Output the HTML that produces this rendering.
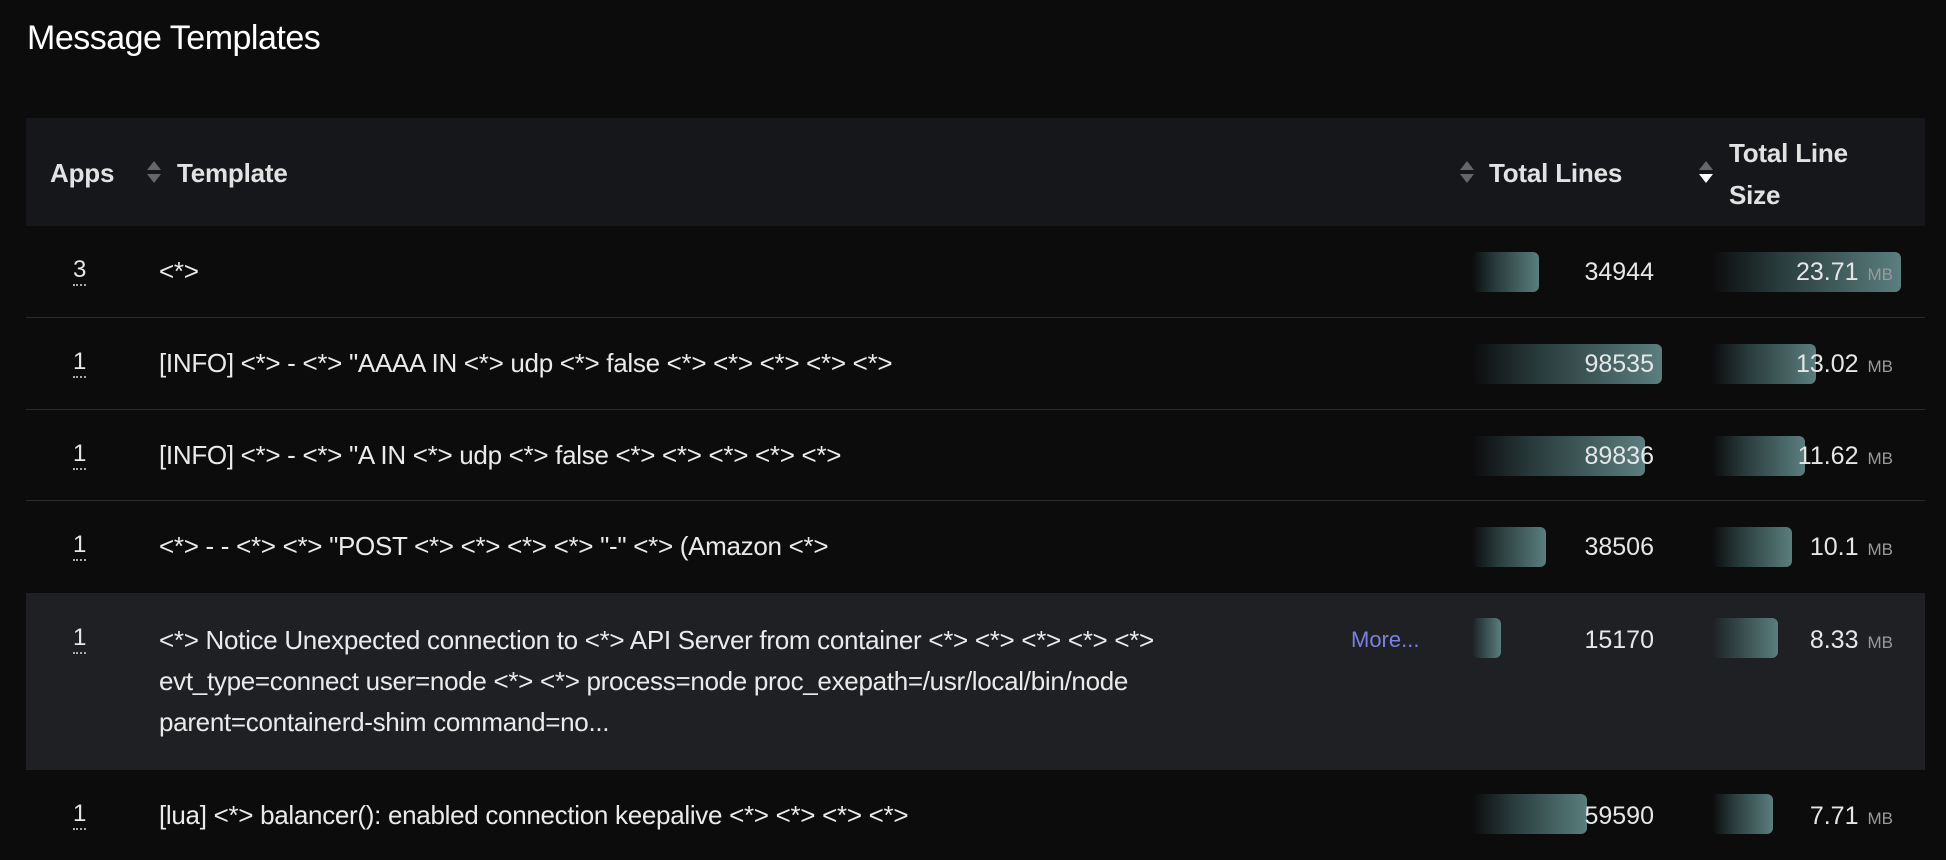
<!DOCTYPE html>
<html><head><meta charset="utf-8"><style>
*{margin:0;padding:0;box-sizing:border-box}
body{width:1946px;height:860px;background:#0c0c0d;color:#e6e6e6;font-family:"Liberation Sans",sans-serif;position:relative;overflow:hidden}
.title{position:absolute;left:27px;top:19px;font-size:34px;color:#fff;letter-spacing:-0.5px}
.hdr{position:absolute;left:26px;top:118px;width:1899px;height:108px;background:#16171a}
.h{position:absolute;font-weight:bold;font-size:26px;color:#e2e2e2;letter-spacing:-0.2px}
.sort{position:absolute;width:16px;height:24px}
.row{position:absolute;left:26px;width:1899px;border-bottom:1px solid #2a2b2d}
.app{position:absolute;left:47px;font-size:24px;border-bottom:2px dotted #aaa;line-height:24px;padding-bottom:2px}
.tpl{position:absolute;left:133px;font-size:26px;line-height:41px;color:#eaeaea;width:1100px;letter-spacing:-0.3px}
.bar{position:absolute;height:40px;border-radius:6px;background:linear-gradient(90deg,rgba(90,125,125,0) 0%,rgba(60,90,90,0.6) 35%,#5b7e7e 100%)}
.bl{left:1446px}.bs{left:1686px}
.num{position:absolute;right:271px;font-size:25px;line-height:40px;text-align:right}
.sz{position:absolute;right:32px;font-size:25px;line-height:40px;text-align:right}
.sz span{font-size:17px;color:#9a9a9a;margin-left:9px}
.more{position:absolute;left:1325px;font-size:22px;color:#7b80e0}
</style></head><body>
<div class="title">Message Templates</div>
<div class="hdr">
 <div class="h" style="left:24px;top:40px">Apps</div>
 <svg class="sort" style="left:120px;top:42px" viewBox="0 0 16 24"><path d="M8 1L15 10H1Z" fill="#666"/><path d="M8 23L15 14H1Z" fill="#666"/></svg>
 <div class="h" style="left:151px;top:40px">Template</div>
 <svg class="sort" style="left:1433px;top:42px" viewBox="0 0 16 24"><path d="M8 1L15 10H1Z" fill="#666"/><path d="M8 23L15 14H1Z" fill="#666"/></svg>
 <div class="h" style="left:1463px;top:40px">Total Lines</div>
 <svg class="sort" style="left:1672px;top:42px" viewBox="0 0 16 24"><path d="M8 1L15 10H1Z" fill="#666"/><path d="M8 23L15 14H1Z" fill="#fff"/></svg>
 <div class="h" style="left:1703px;top:14px;line-height:42px">Total Line<br>Size</div>
</div>

<div class="row" style="top:226px;height:92px">
 <div class="app" style="top:32px">3</div>
 <div class="tpl" style="top:25px">&lt;*&gt;</div>
 <div class="bar bl" style="top:26px;width:67px"></div><div class="num" style="top:26px">34944</div>
 <div class="bar bs" style="top:26px;width:189px"></div><div class="sz" style="top:26px">23.71<span>MB</span></div>
</div>
<div class="row" style="top:318px;height:92px">
 <div class="app" style="top:32px">1</div>
 <div class="tpl" style="top:25px">[INFO] &lt;*&gt; - &lt;*&gt; "AAAA IN &lt;*&gt; udp &lt;*&gt; false &lt;*&gt; &lt;*&gt; &lt;*&gt; &lt;*&gt; &lt;*&gt;</div>
 <div class="bar bl" style="top:26px;width:190px"></div><div class="num" style="top:26px">98535</div>
 <div class="bar bs" style="top:26px;width:104px"></div><div class="sz" style="top:26px">13.02<span>MB</span></div>
</div>
<div class="row" style="top:410px;height:91px">
 <div class="app" style="top:32px">1</div>
 <div class="tpl" style="top:25px">[INFO] &lt;*&gt; - &lt;*&gt; "A IN &lt;*&gt; udp &lt;*&gt; false &lt;*&gt; &lt;*&gt; &lt;*&gt; &lt;*&gt; &lt;*&gt;</div>
 <div class="bar bl" style="top:26px;width:173px"></div><div class="num" style="top:26px">89836</div>
 <div class="bar bs" style="top:26px;width:93px"></div><div class="sz" style="top:26px">11.62<span>MB</span></div>
</div>
<div class="row" style="top:501px;height:92px;border-bottom:none">
 <div class="app" style="top:32px">1</div>
 <div class="tpl" style="top:25px">&lt;*&gt; - - &lt;*&gt; &lt;*&gt; "POST &lt;*&gt; &lt;*&gt; &lt;*&gt; &lt;*&gt; "-" &lt;*&gt; (Amazon &lt;*&gt;</div>
 <div class="bar bl" style="top:26px;width:74px"></div><div class="num" style="top:26px">38506</div>
 <div class="bar bs" style="top:26px;width:80px"></div><div class="sz" style="top:26px">10.1<span>MB</span></div>
</div>
<div class="row" style="top:593px;height:177px;background:#1f2023;border-bottom:none">
 <div class="app" style="top:33px">1</div>
 <div class="tpl" style="top:27px">&lt;*&gt; Notice Unexpected connection to &lt;*&gt; API Server from container &lt;*&gt; &lt;*&gt; &lt;*&gt; &lt;*&gt; &lt;*&gt;<br>evt_type=connect user=node &lt;*&gt; &lt;*&gt; process=node proc_exepath=/usr/local/bin/node<br>parent=containerd-shim command=no...</div>
 <div class="more" style="top:34px">More...</div>
 <div class="bar bl" style="top:25px;width:29px"></div><div class="num" style="top:27px">15170</div>
 <div class="bar bs" style="top:25px;width:66px"></div><div class="sz" style="top:27px">8.33<span>MB</span></div>
</div>
<div class="row" style="top:770px;height:90px;border-bottom:none">
 <div class="app" style="top:32px">1</div>
 <div class="tpl" style="top:25px">[lua] &lt;*&gt; balancer(): enabled connection keepalive &lt;*&gt; &lt;*&gt; &lt;*&gt; &lt;*&gt;</div>
 <div class="bar bl" style="top:24px;width:115px"></div><div class="num" style="top:26px">59590</div>
 <div class="bar bs" style="top:24px;width:61px"></div><div class="sz" style="top:26px">7.71<span>MB</span></div>
</div>
</body></html>
